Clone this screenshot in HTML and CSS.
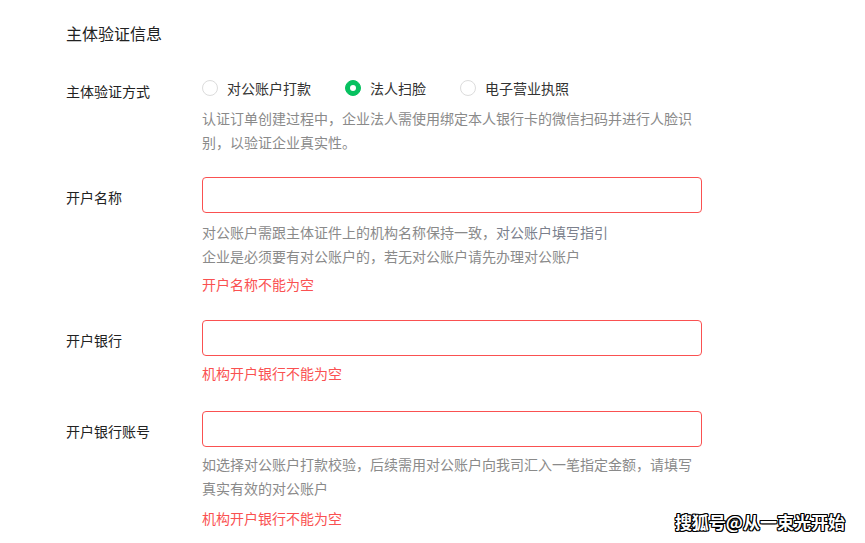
FILE: index.html
```html
<!DOCTYPE html>
<html lang="zh-CN">
<head>
<meta charset="utf-8">
<link rel="stylesheet" href="styles.css">
</head>
<body>
<div class="page">
  <div class="title">主体验证信息</div>

  <div class="row row-first">
    <div class="label label-radio">主体验证方式</div>
    <div class="content">
      <div class="radios">
        <span class="radio"><span class="dot"></span>对公账户打款</span>
        <span class="radio checked"><span class="dot"></span>法人扫脸</span>
        <span class="radio"><span class="dot"></span>电子营业执照</span>
      </div>
      <div class="desc desc-radio">认证订单创建过程中，企业法人需使用绑定本人银行卡的微信扫码并进行人脸识<br>别，以验证企业真实性。</div>
    </div>
  </div>

  <div class="row row-name">
    <div class="label">开户名称</div>
    <div class="content">
      <div class="input"></div>
      <div class="desc desc-name">对公账户需跟主体证件上的机构名称保持一致，<span class="link">对公账户填写指引</span><br>企业是必须要有对公账户的，若无对公账户请先办理对公账户</div>
      <div class="error error-name">开户名称不能为空</div>
    </div>
  </div>

  <div class="row">
    <div class="label">开户银行</div>
    <div class="content">
      <div class="input"></div>
      <div class="error error-direct">机构开户银行不能为空</div>
    </div>
  </div>

  <div class="row row-account">
    <div class="label">开户银行账号</div>
    <div class="content">
      <div class="input"></div>
      <div class="desc desc-account">如选择对公账户打款校验，后续需用对公账户向我司汇入一笔指定金额，请填写<br>真实有效的对公账户</div>
      <div class="error error-account">机构开户银行不能为空</div>
    </div>
  </div>

  <div class="watermark">搜狐号@从一束光开始</div>
</div>
</body>
</html>
```

FILE: styles.css
```css
* { box-sizing: border-box; }
html, body {
  margin: 0;
  padding: 0;
  background: #ffffff;
}
body {
  font-family: "Noto Sans CJK SC", "Noto Sans", sans-serif;
  color: #333333;
  font-size: 14px;
  line-height: 24px;
}
.page {
  position: relative;
  width: 865px;
  height: 543px;
  padding: 21px 0 0 66px;
  overflow: hidden;
}
.title {
  font-size: 16px;
  line-height: 24px;
  color: #222222;
}
.row {
  display: flex;
  margin-top: 24px;
}
.row-first {
  margin-top: 31px;
}
.row-name {
  margin-top: 23px;
}
.row-account {
  margin-top: 26px;
}
.label {
  width: 136px;
  flex: none;
  padding-top: 8px;
  color: #222222;
}
.label-radio {
  padding-top: 3px;
}
.content {
  width: 500px;
}
.radios {
  display: flex;
  height: 24px;
  align-items: center;
}
.radio {
  display: inline-flex;
  align-items: center;
  margin-right: 34px;
  color: #333333;
}
.dot {
  width: 16px;
  height: 16px;
  border: 1px solid #dcdcdc;
  border-radius: 50%;
  margin-right: 9px;
  display: inline-flex;
  align-items: center;
  justify-content: center;
}
.radio.checked .dot {
  background: #07c160;
  border-color: #07c160;
}
.radio.checked .dot::after {
  content: "";
  width: 6px;
  height: 6px;
  border-radius: 50%;
  background: #ffffff;
}
.desc {
  color: #8a8a8a;
  white-space: nowrap;
}
.desc-radio {
  margin-top: 6px;
}
.desc-name {
  margin-top: 7px;
}
.desc-account {
  margin-top: 5px;
}
.link {
  color: #7b7f8c;
}
.input {
  height: 36px;
  border: 1px solid #fa5151;
  border-radius: 4px;
  background: #ffffff;
}
.error {
  color: #fa5151;
}
.error-name {
  margin-top: 4px;
}
.error-direct {
  margin-top: 5px;
}
.error-account {
  margin-top: 6px;
}
.watermark {
  position: absolute;
  right: 20px;
  bottom: 9px;
  font-size: 17px;
  line-height: 24px;
  font-weight: bold;
  color: #ffffff;
  text-shadow: 1px 1px 0 #000, -1px -1px 0 #000, 1px -1px 0 #000, -1px 1px 0 #000, 0 1px 0 #000, 0 -1px 0 #000, 1px 0 0 #000, -1px 0 0 #000;
}
```
